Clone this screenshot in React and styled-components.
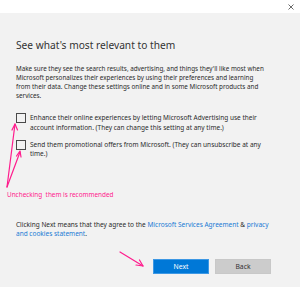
import React from "react";
import styled, { createGlobalStyle } from "styled-components";

const GlobalStyle = createGlobalStyle`
  html, body {
    margin: 0;
    padding: 0;
    background: #f2f2f2;
  }
  body {
    font-family: "Noto Sans", "Open Sans", sans-serif;
  }
`;

const Window = styled.div`
  position: relative;
  width: 300px;
  height: 287px;
  display: flex;
  flex-direction: column;
  background: #f2f2f2;
  overflow: hidden;
`;

const TitleBar = styled.div`
  flex: none;
  height: 13px;
  background: #ffffff;
  display: flex;
  justify-content: flex-end;
  align-items: center;
  padding-right: 6px;
`;

const Close = styled.svg`
  width: 6px;
  height: 6px;
`;

const Body = styled.div`
  display: flex;
  flex-direction: column;
  padding: 0 12px 0 16px;
  color: #2b2b2b;
`;

const Heading = styled.h1`
  margin: 26px 0 0;
  font-size: 10.2px;
  line-height: 13px;
  font-weight: 400;
  color: #333;
  white-space: nowrap;
`;

const Para = styled.p`
  margin: ${(p) => p.$top}px 0 0;
  font-size: ${(p) => p.$size || 6.5}px;
  line-height: 9px;
  color: #2b2b2b;
  white-space: nowrap;
`;

const Options = styled.div`
  display: flex;
  flex-direction: column;
  gap: 7.5px;
  margin-top: 13.5px;
`;

const Option = styled.label`
  display: flex;
  align-items: flex-start;
  gap: 4px;
  font-size: 6.5px;
  line-height: 9.5px;
  white-space: nowrap;
`;

const Box = styled.span`
  flex: none;
  width: 8px;
  height: 8px;
  border: 1px solid #4a4a4a;
  background: #f2f2f2;
`;

const Note = styled.div`
  margin: 31.5px 0 0 -9px;
  font-size: 6.4px;
  line-height: 9px;
  color: #ff1c8d;
  white-space: nowrap;
`;

const Link = styled.a`
  color: #1a7ad4;
  text-decoration: none;
`;

const Buttons = styled.div`
  display: flex;
  justify-content: flex-end;
  gap: 6px;
  margin-top: 20.5px;
  padding-right: 17px;
`;

const Button = styled.button`
  box-sizing: border-box;
  flex: none;
  width: 56px;
  height: 15px;
  padding: 0;
  font-family: inherit;
  font-size: 6.8px;
  line-height: 13px;
  border: 1px solid ${(p) => (p.$primary ? "#3d98e4" : "#c8c8c8")};
  background: ${(p) => (p.$primary ? "#0078d7" : "#cccccc")};
  color: ${(p) => (p.$primary ? "#ffffff" : "#333333")};
`;

const Arrows = styled.svg`
  position: absolute;
  left: 0;
  top: 0;
  width: 300px;
  height: 287px;
  pointer-events: none;
`;

export default function App() {
  return (
    <>
      <GlobalStyle />
      <Window>
        <TitleBar>
          <Close viewBox="0 0 6 6">
            <path d="M0.5 0.5 L5.5 5.5 M5.5 0.5 L0.5 5.5" stroke="#444" strokeWidth="0.8" />
          </Close>
        </TitleBar>
        <Body>
          <Heading>See what's most relevant to them</Heading>
          <Para $top={11.5} $size={6.3}>
            Make sure they see the search results, advertising, and things they'll like most when
            <br />
            Microsoft personalizes their experiences by using their preferences and learning
            <br />
            from their data. Change these settings online and in some Microsoft products and
            <br />
            services.
          </Para>
          <Options>
            <Option>
              <Box />
              <span>
                Enhance their online experiences by letting Microsoft Advertising use their
                <br />
                account information. (They can change this setting at any time.)
              </span>
            </Option>
            <Option>
              <Box />
              <span>
                Send them promotional offers from Microsoft. (They can unsubscribe at any
                <br />
                time.)
              </span>
            </Option>
          </Options>
          <Note>Unchecking&nbsp; them is recommended</Note>
          <Para $top={21}>
            Clicking Next means that they agree to the <Link>Microsoft Services Agreement</Link> &amp;{" "}
            <Link>privacy</Link>
            <br />
            <Link>and cookies statement</Link>.
          </Para>
          <Buttons>
            <Button $primary>Next</Button>
            <Button>Back</Button>
          </Buttons>
        </Body>
        <Arrows viewBox="0 0 300 287">
          <g stroke="#ff1c8d" strokeWidth="1.2" fill="none" strokeLinecap="round" strokeLinejoin="round">
            <path d="M7 187 L15 124" />
            <path d="M12 130 L15 124 L17.5 130" />
            <path d="M7 187 L20 152" />
            <path d="M16.5 156 L20 151 L21 157" />
            <path d="M120 252 L143 266" />
            <path d="M136 265 L143 266 L139.5 260" />
          </g>
        </Arrows>
      </Window>
    </>
  );
}
